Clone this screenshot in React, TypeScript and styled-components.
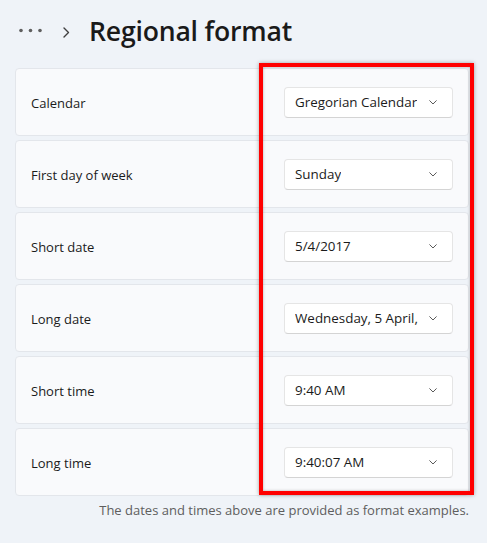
import React from "react";
import styled, { createGlobalStyle } from "styled-components";

const Global = createGlobalStyle`
  html, body { margin: 0; padding: 0; }
  body {
    background: #eff3f8;
    font-family: "Segoe UI", "Open Sans", "Noto Sans", sans-serif;
    color: #1b1b1b;
  }
`;

const Page = styled.div`
  position: relative;
  width: 487px;
  height: 543px;
  box-sizing: border-box;
  padding: 0 18px 0 15px;
  overflow: hidden;
`;

const Header = styled.div`
  display: flex;
  align-items: center;
  height: 64px;
  padding-left: 4px;
`;

const Dots = styled.svg`
  width: 23px;
  height: 5px;
  margin-top: -3px;
`;

const Crumb = styled.svg`
  width: 8px;
  height: 11px;
  margin-left: 20px;
`;

const Title = styled.h1`
  margin: 0 0 0 19px;
  font-size: 26.6px;
  font-weight: 600;
  color: #1a1a1a;
  letter-spacing: -0.2px;
  line-height: 1;
  padding-bottom: 2px;
`;

const List = styled.div`
  display: flex;
  flex-direction: column;
  gap: 4px;
  margin-top: 4px;
`;

const Card = styled.div`
  display: flex;
  align-items: center;
  justify-content: space-between;
  height: 68px;
  box-sizing: border-box;
  background: #f9fafc;
  border: 1px solid #e3e6eb;
  border-radius: 4px;
  padding: 0 15px;
`;

const Label = styled.span`
  font-size: 13px;
  color: #1b1b1b;
  padding-top: 1px;
`;

const Select = styled.div`
  display: flex;
  align-items: center;
  justify-content: space-between;
  width: 169px;
  height: 31px;
  box-sizing: border-box;
  background: #ffffff;
  border: 1px solid #e5e5e5;
  border-bottom-color: #d4d4d4;
  border-radius: 4px;
  padding: 0 15px 0 10px;
`;

const SelectText = styled.span`
  font-size: 13.4px;
  color: #1b1b1b;
  white-space: nowrap;
  overflow: hidden;
  max-width: 130px;
`;

const Chevron = styled.svg`
  width: 8px;
  height: 5px;
  flex: none;
`;

const Note = styled.div`
  text-align: right;
  font-size: 13px;
  color: #5e5e5e;
  margin-top: 5px;
`;

const Highlight = styled.div`
  position: absolute;
  left: 259px;
  top: 63px;
  width: 215px;
  height: 432px;
  box-sizing: border-box;
  border: 4px solid #ff0000;
  box-shadow: 0 0 4px rgba(0, 0, 0, 0.35), inset 0 0 3px rgba(0, 0, 0, 0.3);
  pointer-events: none;
`;

const rows: [string, string][] = [
  ["Calendar", "Gregorian Calendar"],
  ["First day of week", "Sunday"],
  ["Short date", "5/4/2017"],
  ["Long date", "Wednesday, 5 April,"],
  ["Short time", "9:40 AM"],
  ["Long time", "9:40:07 AM"],
];

export default function App() {
  return (
    <>
      <Global />
      <Page>
        <Header>
          <Dots viewBox="0 0 23 5">
            <circle cx="2" cy="2.5" r="1.8" fill="#5f5f5f" />
            <circle cx="11.5" cy="2.5" r="1.8" fill="#5f5f5f" />
            <circle cx="21" cy="2.5" r="1.8" fill="#5f5f5f" />
          </Dots>
          <Crumb viewBox="0 0 8 11">
            <path d="M2 1 L6.5 5.5 L2 10" fill="none" stroke="#3f3f3f" strokeWidth="1.4" strokeLinecap="round" strokeLinejoin="round" />
          </Crumb>
          <Title>Regional format</Title>
        </Header>
        <List>
          {rows.map(([label, value]) => (
            <Card key={label}>
              <Label>{label}</Label>
              <Select>
                <SelectText>{value}</SelectText>
                <Chevron viewBox="0 0 8 5">
                  <path d="M0.7 0.7 L4 4 L7.3 0.7" fill="none" stroke="#5a5a5a" strokeWidth="1" strokeLinecap="round" strokeLinejoin="round" />
                </Chevron>
              </Select>
            </Card>
          ))}
        </List>
        <Note>The dates and times above are provided as format examples.</Note>
        <Highlight />
      </Page>
    </>
  );
}
